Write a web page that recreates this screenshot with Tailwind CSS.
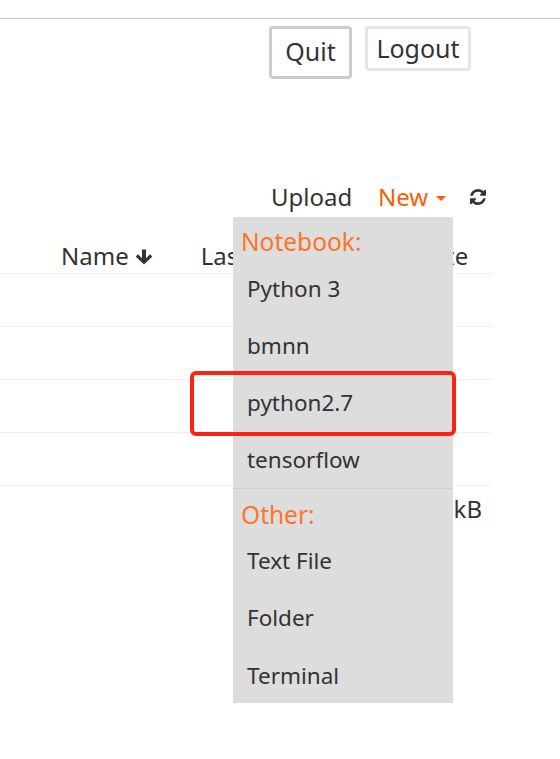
<!DOCTYPE html>
<html lang="en">
<head>
  <meta charset="UTF-8">
  <title>Jupyter</title>
  <script src="https://cdn.jsdelivr.net/npm/@tailwindcss/browser@4"></script>
</head>
<body class="bg-white text-[#333] text-[24px] font-['Noto_Sans',sans-serif] h-[759px] overflow-hidden">

  <!-- Header -->
  <div class="h-[19px] border-b border-[#c9c9c9]"></div>
  <div class="flex items-start pl-[269px] pt-[7px] gap-[13px] h-[154px]">
    <button class="w-[83px] h-[53px] pb-[2px] border-[3px] border-[#ccc] rounded-[4px] text-[25px] leading-none">Quit</button>
    <button class="w-[106px] h-[45px] border-[3px] border-[#e6e6e6] rounded-[4px] text-[25px] leading-none">Logout</button>
  </div>

  <!-- Toolbar + list -->
  <div class="relative w-[492px]">
    <div class="flex items-center h-[45px] pl-[271px] pt-[2px]">
      <span class="w-[107px]">Upload</span>
      <span class="text-[#f85f05]">New</span>
      <span class="ml-[8px] mt-[3px] border-x-[5px] border-x-transparent border-t-[5px] border-t-[#f85f05]"></span>
      <svg class="ml-[24px] mt-[1px]" width="16" height="16" viewBox="0 0 1536 1536"><path fill="#333" d="M1511 928q0 5-1 7-64 268-268 434.500T764 1536q-146 0-282.500-55T238 1324l-129 129q-19 19-45 19t-45-19-19-45V960q0-26 19-45t45-19h448q26 0 45 19t19 45-19 45l-137 137q71 66 161 102t187 36q134 0 250-65t186-179q11-17 53-117 8-23 30-23h192q13 0 22.500 9.500t9.500 22.500zm25-800v448q0 26-19 45t-45 19h-448q-26 0-45-19t-19-45 19-45l138-138Q969 256 768 256q-134 0-250 65T332 500q-11 17-53 117-8 23-30 23H50q-13 0-22.500-9.500T18 608v-7q65-268 270-434.500T768 0q146 0 284 55.500T1297 212l130-129q19-19 45-19t45 19 19 45z"/></svg>
    </div>

    <div class="flex items-end h-[56px] border-b border-[#f0f0f0] pl-[61px] pb-[1px] leading-[32px]">
      <span>Name</span>
      <svg class="ml-[6px] mb-[7px]" width="18" height="16" viewBox="0 0 18 16"><path d="M9 15.500 .7 7.500l2.300-2.300 4 4V.5h4v8.700l4-4 2.300 2.300z" fill="#333"/></svg>
      <span class="ml-[48px]">Last Modified</span>
      <span class="ml-[28px]">File size</span>
    </div>
    <div class="h-[53px] border-b border-[#f0f0f0]"></div>
    <div class="h-[53px] border-b border-[#f0f0f0]"></div>
    <div class="h-[53px] border-b border-[#f0f0f0]"></div>
    <div class="h-[53px] border-b border-[#f0f0f0]"></div>
    <div class="flex justify-end pr-[10px] pt-[5px]">kB</div>

    <!-- Dropdown -->
    <div class="absolute left-[233px] top-[44px] w-[220px] h-[486px] bg-[#dddddd] rounded-t-[2px] text-[22.500px]">
      <div class="pl-[8px] h-[43px] pt-[8px] text-[#ff7426] text-[24.500px] leading-[34px]">Notebook:</div>
      <div class="flex items-center h-[57px] pl-[14px]">Python 3</div>
      <div class="flex items-center h-[57px] pl-[14px]">bmnn</div>
      <div class="flex items-center h-[57px] pl-[14px]">python2.7</div>
      <div class="flex items-center h-[58px] pl-[14px] pt-[1px] border-b border-[#cfcfcf]">tensorflow</div>
      <div class="pl-[8px] h-[44px] pt-[9px] text-[#ff7426] text-[24.500px] leading-[34px]">Other:</div>
      <div class="flex items-center h-[57px] pl-[14px] pb-[2px]">Text File</div>
      <div class="flex items-center h-[57px] pl-[14px] pb-[2px]">Folder</div>
      <div class="flex items-center h-[57px] pl-[14px]">Terminal</div>
    </div>

    <!-- Red annotation box -->
    <div class="absolute left-[190px] top-[198px] w-[266px] h-[65px] border-[4px] border-[#fb2314] rounded-[6px]"></div>
  </div>
</body>
</html>
